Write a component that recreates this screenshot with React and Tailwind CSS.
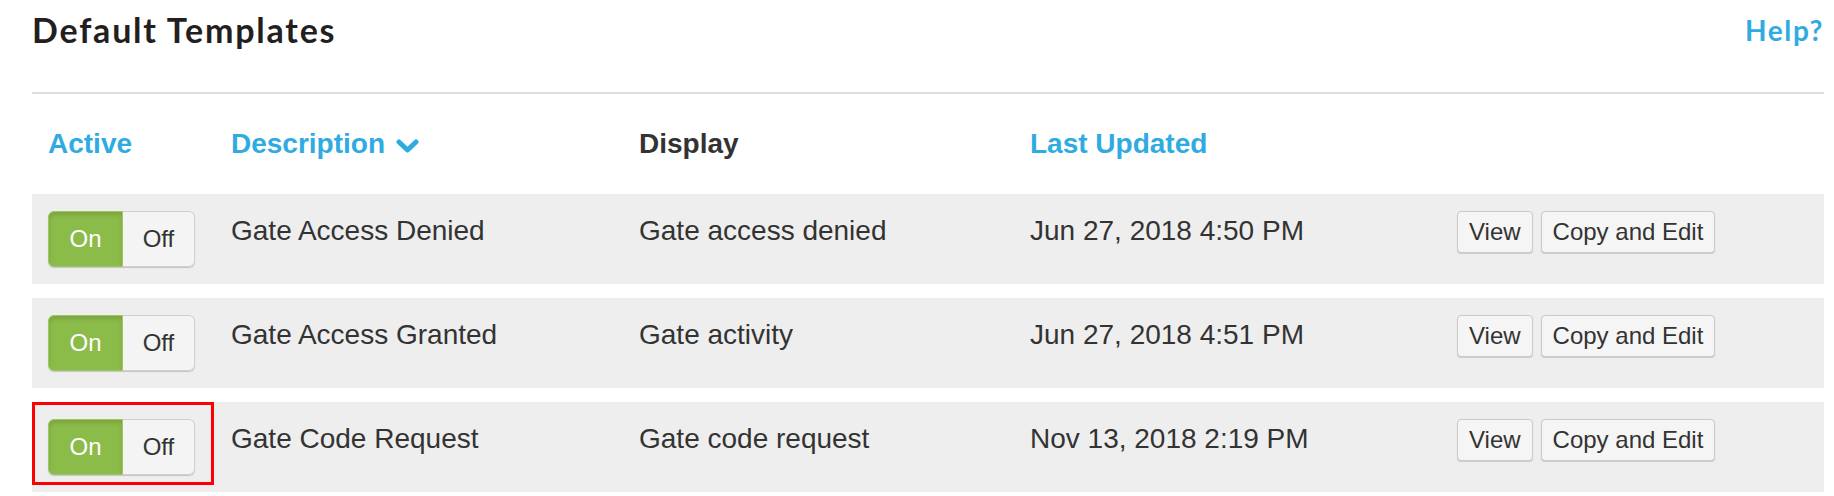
import React from "react";

const rows = [
  { desc: "Gate Access Denied", display: "Gate access denied", updated: "Jun 27, 2018 4:50 PM" },
  { desc: "Gate Access Granted", display: "Gate activity", updated: "Jun 27, 2018 4:51 PM" },
  { desc: "Gate Code Request", display: "Gate code request", updated: "Nov 13, 2018 2:19 PM", highlight: true },
];

function Toggle() {
  return (
    <div className="inline-flex h-[56px] rounded-[6px] shadow-[0_1px_1px_rgba(0,0,0,0.18)] text-[24px] leading-none align-top">
      <div className="w-[75px] flex items-center justify-center rounded-l-[6px] bg-[#8bbb48] border border-[#9cc762] text-white shadow-[inset_0_3px_4px_rgba(0,0,0,0.12)]">
        On
      </div>
      <div className="w-[72px] flex items-center justify-center rounded-r-[6px] bg-[#f4f4f4] border border-l-0 border-[#cfcfcf] text-[#333]">
        Off
      </div>
    </div>
  );
}

function Btn({ children }) {
  return (
    <button className="h-[42px] px-[11px] rounded-[4px] bg-[#f5f5f5] border border-[#c9c9c9] shadow-[0_1px_1px_rgba(0,0,0,0.15)] text-[24px] leading-none text-[#333]">
      {children}
    </button>
  );
}

export default function App() {
  return (
    <div
      className="w-[1834px] h-[496px] bg-white pl-[32px] pr-[10px] overflow-hidden"
      style={{ fontFamily: '"Liberation Sans", Arial, sans-serif' }}
    >
      <div className="h-[92px] flex items-start justify-between pt-[10px]">
        <h1
          className="text-[34px] leading-[40px] font-bold text-[#231f20] tracking-[1.8px]"
          style={{ fontFamily: 'Lato, "Noto Sans", sans-serif' }}
        >
          Default Templates
        </h1>
        <a
          className="text-[28px] leading-[40px] font-bold text-[#2fabe1] tracking-[1.6px]"
          style={{ fontFamily: 'Lato, "Noto Sans", sans-serif' }}
        >
          Help?
        </a>
      </div>
      <div className="h-[2px] bg-[#dedede]" />
      <div className="h-[100px] flex items-start pt-[30px] text-[28px] leading-[40px] font-bold">
        <div className="w-[199px] pl-[16px] text-[#2fabe1]">Active</div>
        <div className="w-[408px] flex items-center text-[#2fabe1]">
          <span>Description</span>
          <svg className="ml-[11px] mt-[4px]" width="23" height="15" viewBox="0 0 23 15">
            <polyline points="3,3 11.5,11 20,3" fill="none" stroke="#2fabe1" strokeWidth="5" strokeLinecap="round" strokeLinejoin="round" />
          </svg>
        </div>
        <div className="w-[391px] text-[#333]">Display</div>
        <div className="w-[427px] text-[#2fabe1]">Last Updated</div>
      </div>
      <div className="flex flex-col gap-[14px]">
        {rows.map((r) => (
          <div
            key={r.desc}
            className="relative h-[90px] bg-[#eeeeee] flex items-start pt-[17px] text-[28px] leading-[40px] text-[#333]"
          >
            <div className="w-[199px] pl-[16px]">
              <Toggle />
            </div>
            <div className="w-[408px]">{r.desc}</div>
            <div className="w-[391px]">{r.display}</div>
            <div className="w-[427px]">{r.updated}</div>
            <div className="flex gap-[8px]">
              <Btn>View</Btn>
              <Btn>Copy and Edit</Btn>
            </div>
            {r.highlight && (
              <div className="absolute left-0 top-0 w-[182px] h-[83px] border-[3px] border-[#ff0000] pointer-events-none" />
            )}
          </div>
        ))}
      </div>
    </div>
  );
}
